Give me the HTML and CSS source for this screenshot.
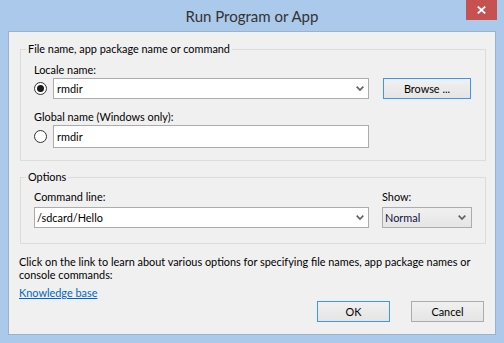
FILE: index.html
```html
<!DOCTYPE html>
<html lang="en">
<head>
<meta charset="utf-8">
<title>Run Program or App</title>
<link rel="stylesheet" href="styles.css">
</head>
<body>
<div class="window">
  <div class="titlebar">
    <span class="title">Run Program or App</span>
    <button class="close" aria-label="Close">
      <svg width="9" height="8" viewBox="0 0 9 8"><path d="M0.8 0.5 L8.2 7.5 M8.2 0.5 L0.8 7.5" stroke="#fff" stroke-width="1.8" fill="none"/></svg>
    </button>
  </div>
  <div class="client">
    <div class="group group-file">
      <span class="legend">File name, app package name or command</span>
      <div class="label">Locale name:</div>
      <div class="row">
        <span class="radio checked"><span class="dot"></span></span>
        <div class="combo field-wide">
          <span class="value">rmdir</span>
          <svg class="chev" width="8" height="5" viewBox="0 0 8 5"><path d="M0.7 0.7 L4 4 L7.3 0.7" stroke="#606060" stroke-width="1.7" fill="none"/></svg>
        </div>
        <button class="btn default browse">Browse ...</button>
      </div>
      <div class="label label-gap">Global name (Windows only):</div>
      <div class="row">
        <span class="radio"></span>
        <div class="edit field-wide"><span class="value">rmdir</span></div>
      </div>
    </div>
    <div class="group group-options">
      <span class="legend">Options</span>
      <div class="opts">
        <div class="col col-cmd">
          <div class="label">Command line:</div>
          <div class="combo cmd-combo">
            <span class="value">/sdcard/Hello</span>
            <svg class="chev" width="8" height="5" viewBox="0 0 8 5"><path d="M0.7 0.7 L4 4 L7.3 0.7" stroke="#606060" stroke-width="1.7" fill="none"/></svg>
          </div>
        </div>
        <div class="col col-show">
          <div class="label">Show:</div>
          <div class="select">
            <span class="value">Normal</span>
            <svg class="chev" width="8" height="5" viewBox="0 0 8 5"><path d="M0.7 0.7 L4 4 L7.3 0.7" stroke="#606060" stroke-width="1.7" fill="none"/></svg>
          </div>
        </div>
      </div>
    </div>
    <p class="info">Click on the link to learn about various options for specifying file names, app package names or<br>console commands:</p>
    <a class="link" href="#">Knowledge base</a>
    <div class="buttons">
      <button class="btn default">OK</button>
      <button class="btn">Cancel</button>
    </div>
  </div>
</div>
</body>
</html>
```
FILE: styles.css
```css
* { box-sizing: border-box; }
html, body { margin: 0; padding: 0; }
body {
  width: 504px;
  height: 343px;
  overflow: hidden;
  font-family: Lato, "Liberation Sans", sans-serif;
  font-size: 10.9px;
  color: #000;
}
.window {
  position: relative;
  width: 504px;
  height: 343px;
  background: #abc9ea;
  padding: 0 8px 8px;
  display: flex;
  flex-direction: column;
}
.titlebar {
  height: 31px;
  display: flex;
  justify-content: center;
  align-items: center;
  margin: 0 -8px;
}
.title {
  font-size: 15px;
  color: #333;
  padding-top: 1px;
}
.close {
  position: absolute;
  top: 0;
  right: 7px;
  width: 31px;
  height: 20px;
  border: 0;
  padding: 0;
  background: #c75050;
  display: flex;
  align-items: center;
  justify-content: center;
}
.client {
  flex: 1;
  background: #f0f0f0;
  border: 1px solid #9db2c9;
  display: flex;
  flex-direction: column;
}
.group {
  position: relative;
  border: 1px solid #dcdcdc;
  margin: 0 9px 0 11px;
  padding-left: 13px;
}
.group-file {
  margin-top: 17px;
  padding-top: 12px;
  padding-bottom: 12px;
}
.group-options {
  margin-top: 16px;
  padding-top: 11px;
  padding-bottom: 15px;
}
.legend {
  position: absolute;
  top: -9px;
  left: 5px;
  padding: 0 2px;
  line-height: 16px;
  background: #f0f0f0;
}
.label {
  line-height: 16px;
  height: 16px;
  white-space: nowrap;
}
.label-gap { margin-top: 10px; }
.row {
  display: flex;
  align-items: center;
}
.radio {
  width: 13px;
  height: 13px;
  border: 1px solid #333;
  border-radius: 50%;
  background: #fff;
  margin-right: 6px;
  display: grid;
  place-items: center;
  flex: none;
}
.dot {
  width: 7px;
  height: 7px;
  border-radius: 50%;
  background: #1a1a1a;
}
.combo, .edit, .select {
  display: flex;
  align-items: center;
  border: 1px solid #acacac;
  background: #fff;
  height: 21px;
  padding-left: 3px;
  white-space: nowrap;
}
.field-wide { width: 316px; }
.edit { height: 23px; }
.combo .value, .select .value { flex: 1; }
.chev { margin-right: 4px; flex: none; }
.btn {
  font-family: inherit;
  font-size: 10.9px;
  color: #000;
  height: 21px;
  border: 1px solid #acacac;
  background: linear-gradient(#f0f0f0, #e5e5e5);
  padding: 0;
}
.btn.default { border-color: #3c97f4; }
.browse {
  width: 88px;
  margin-left: 14px;
}
.opts {
  display: flex;
  gap: 13px;
}
.cmd-combo {
  width: 335px;
  margin-top: 2px;
  padding-left: 2px;
}
.select {
  width: 90px;
  margin-top: 2px;
  padding-left: 2px;
  background: linear-gradient(#f0f0f0, #e5e5e5);
  color: #101040;
}
.select .chev { margin-right: 5px; }
.info {
  margin: 12px 0 0 10px;
  line-height: 12.5px;
  white-space: nowrap;
}
.link {
  margin: 4px 0 0 10px;
  line-height: 15px;
  color: #0066cc;
  align-self: flex-start;
}
.buttons {
  margin-top: auto;
  margin-bottom: 12px;
  padding-right: 11px;
  display: flex;
  justify-content: flex-end;
  gap: 21px;
}
.buttons .btn { width: 73px; }
```
